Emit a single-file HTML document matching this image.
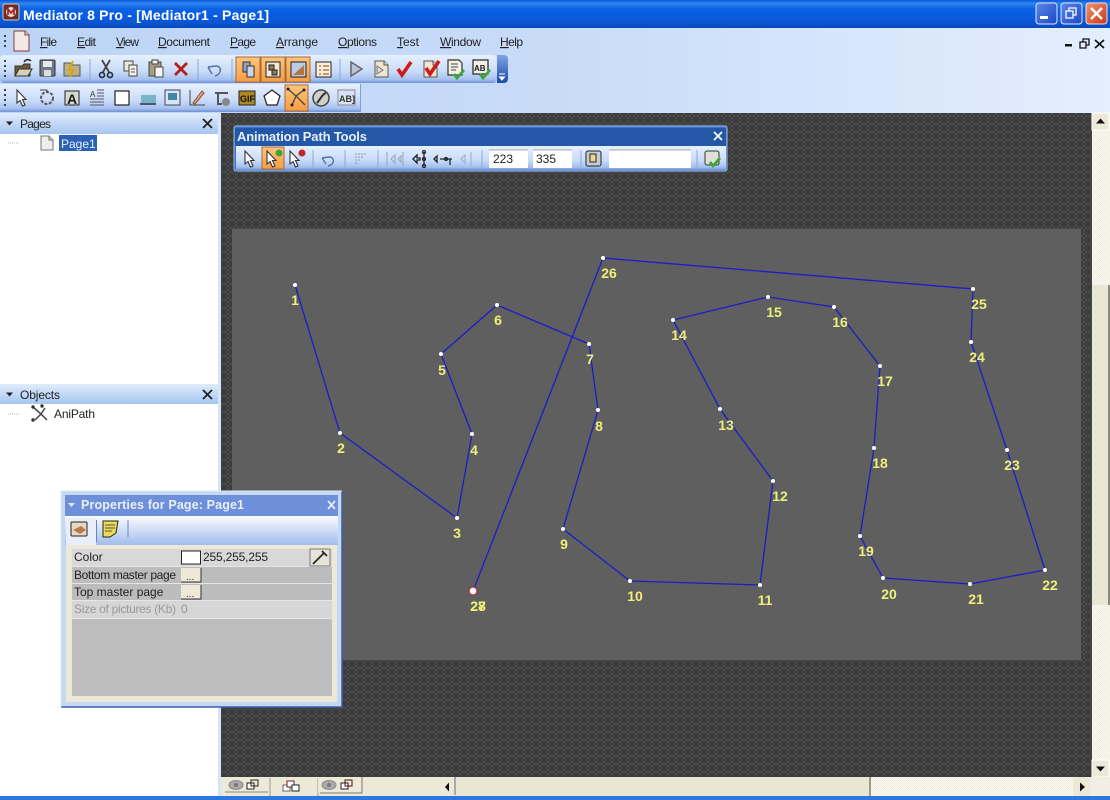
<!DOCTYPE html>
<html><head><meta charset="utf-8"><title>Mediator 8 Pro</title>
<style>
html,body{margin:0;padding:0;background:#fff;width:1110px;height:800px;overflow:hidden}
svg{display:block;filter:blur(.35px)}
text{font-family:"Liberation Sans",sans-serif;font-size:12px;fill:#1a1a1a}
.m{font-size:12px;fill:#222}
.l{font-size:14px;font-weight:bold;fill:#eef07a}
.u{text-decoration:underline}
.p{font-size:12px;fill:#222}
</style></head><body>
<svg width="1110" height="800" viewBox="0 0 1110 800" xmlns="http://www.w3.org/2000/svg">
<defs>
<linearGradient id="tb" x1="0" y1="0" x2="0" y2="1"><stop offset="0" stop-color="#0a55d8"/><stop offset=".12" stop-color="#2f86f2"/><stop offset=".3" stop-color="#0b63e6"/><stop offset=".8" stop-color="#0a56d6"/><stop offset="1" stop-color="#0a48b8"/></linearGradient>
<linearGradient id="mb" x1="0" y1="0" x2="1" y2="0"><stop offset="0" stop-color="#bcd4f6"/><stop offset=".5" stop-color="#c8dcf8"/><stop offset="1" stop-color="#e4eefd"/></linearGradient>
<linearGradient id="tool" x1="0" y1="0" x2="0" y2="1"><stop offset="0" stop-color="#e6f0fe"/><stop offset=".6" stop-color="#c8dbf8"/><stop offset=".88" stop-color="#a5c0ee"/><stop offset="1" stop-color="#6f90d4"/></linearGradient>
<linearGradient id="head" x1="0" y1="0" x2="0" y2="1"><stop offset="0" stop-color="#e0ecfc"/><stop offset="1" stop-color="#a6c5f0"/></linearGradient>
<linearGradient id="orange" x1="0" y1="0" x2="0" y2="1"><stop offset="0" stop-color="#fcc67c"/><stop offset="1" stop-color="#f79c42"/></linearGradient>
<linearGradient id="ptab" x1="0" y1="0" x2="0" y2="1"><stop offset="0" stop-color="#fbfcff"/><stop offset="1" stop-color="#a2bcec"/></linearGradient>
<linearGradient id="btnb" x1="0" y1="0" x2="1" y2="1"><stop offset="0" stop-color="#5b86ea"/><stop offset="1" stop-color="#1d48c4"/></linearGradient>
<linearGradient id="btnr" x1="0" y1="0" x2="1" y2="1"><stop offset="0" stop-color="#ee9470"/><stop offset="1" stop-color="#c9381a"/></linearGradient>
<linearGradient id="chev" x1="0" y1="0" x2="0" y2="1"><stop offset="0" stop-color="#7ea3e6"/><stop offset="1" stop-color="#1e4aa6"/></linearGradient>
<pattern id="hatch" width="8" height="8" patternUnits="userSpaceOnUse"><rect width="8" height="8" fill="#404040"/><path d="M4 0.500L7.500 4L4 7.500L.5 4Z" fill="#4e4e4e"/><path d="M0 0L8 8M8 0L0 8" stroke="#363636" stroke-width=".8"/></pattern>
<pattern id="dith" width="2" height="2" patternUnits="userSpaceOnUse"><rect width="2" height="2" fill="#fbfaf3"/><rect width="1" height="1" fill="#efecdd"/><rect x="1" y="1" width="1" height="1" fill="#efecdd"/></pattern>
<g id="arrow"><path d="M-4-8L-4 5L-1 2.500L1.500 8L4 7L1.500 1.500L5 1.500Z" fill="#fff" stroke="#333" stroke-width="1.100"/></g>
<g id="doc"><path d="M-6-8H3L7-4V8H-6Z" fill="#f0e6d0" stroke="#555"/><path d="M3-8V-4H7" fill="#ddd" stroke="#555"/></g>
<g id="check"><path d="M-7 0L-3 6L6-7" fill="none" stroke="#cc1c1c" stroke-width="3.600"/></g>
<g id="gcheck"><path d="M-3 4L0 8L7 0" fill="none" stroke="#3ca63c" stroke-width="2.800"/></g>
<g id="textdoc"><path d="M-7-8H4L7-5V7H-7Z" fill="#f4f2e6" stroke="#333" stroke-width="1.200"/><path d="M-4-4H3M-4-1H3M-4 2H1" stroke="#444"/></g>
</defs>

<rect width="1110" height="800" fill="#fff"/>
<!-- title bar -->
<rect width="1110" height="28" fill="url(#tb)"/>
<rect x="3" y="4" width="16" height="16" rx="2" fill="#6d2b24" stroke="#d8c8c0"/>
<circle cx="11" cy="12" r="5" fill="#e9d8d0"/><path d="M8 15V9L11 13L14 9V15" fill="none" stroke="#9c1c1c" stroke-width="1.600"/>
<text x="23" y="20" style="font-size:14px;font-weight:bold;fill:#fff" textLength="246">Mediator 8 Pro - [Mediator1 - Page1]</text>
<rect x="1036" y="3" width="21" height="21" rx="3" fill="url(#btnb)" stroke="#dfe8fb"/><rect x="1040" y="16" width="8" height="3" fill="#fff"/>
<rect x="1061" y="3" width="21" height="21" rx="3" fill="url(#btnb)" stroke="#dfe8fb"/><path d="M1066 11h7v7h-7zM1069 11V8h7v7h-3" fill="none" stroke="#fff" stroke-width="1.300"/>
<rect x="1086" y="3" width="21" height="21" rx="3" fill="url(#btnr)" stroke="#f2e0dc"/><path d="M1091 8L1102 19M1102 8L1091 19" stroke="#fff" stroke-width="2.400"/>

<!-- command bars background -->
<rect y="28" width="1110" height="85" fill="url(#mb)"/>
<path d="M5 35v2M5 40v2M5 45v2" stroke="#345" stroke-width="2"/>
<path d="M14 31H25L29 35V51H14Z" fill="#f2e8e4" stroke="#8a3a3a"/><path d="M25 31V35H29" fill="#ddd" stroke="#8a3a3a"/>
<text class="m" x="40" y="46" textLength="17"><tspan class="u">F</tspan>ile</text>
<text class="m" x="77" y="46" textLength="19"><tspan class="u">E</tspan>dit</text>
<text class="m" x="116" y="46" textLength="23"><tspan class="u">V</tspan>iew</text>
<text class="m" x="158" y="46" textLength="52"><tspan class="u">D</tspan>ocument</text>
<text class="m" x="230" y="46" textLength="26"><tspan class="u">P</tspan>age</text>
<text class="m" x="276" y="46" textLength="42"><tspan class="u">A</tspan>rrange</text>
<text class="m" x="338" y="46" textLength="39"><tspan class="u">O</tspan>ptions</text>
<text class="m" x="397" y="46" textLength="22"><tspan class="u">T</tspan>est</text>
<text class="m" x="440" y="46" textLength="41"><tspan class="u">W</tspan>indow</text>
<text class="m" x="500" y="46" textLength="23"><tspan class="u">H</tspan>elp</text>
<rect x="1065" y="44" width="7" height="2.500" fill="#111"/>
<path d="M1080 42h6v6h-6zM1083 42v-3h6v6h-3" fill="none" stroke="#111" stroke-width="1.300"/>
<path d="M1095 40L1104 48M1104 40L1095 48" stroke="#111" stroke-width="1.700"/>

<!-- toolbar 1 -->
<rect x="0" y="55" width="497" height="28" rx="4" fill="url(#tool)"/>
<path d="M497 55h7a4 4 0 0 1 4 4v20a4 4 0 0 1-4 4h-7Z" fill="url(#chev)"/>
<path d="M499 74h6M499.500 77h5l-2.500 3Z" stroke="#fff" fill="#fff"/>
<path d="M5 60v2M5 65v2M5 70v2M5 75v2" stroke="#345" stroke-width="2"/>
<path d="M15 66H22L24 64H30V76H15Z" fill="#6d5a38" stroke="#333"/><path d="M15 76L19 69H32L28 76Z" fill="#d8d0b8" stroke="#333"/><path d="M24 62C26 59 29 59 31 61" fill="none" stroke="#222" stroke-width="1.500"/>
<rect x="40" y="60" width="15" height="16" rx="1" fill="#6e7a8a" stroke="#333"/><rect x="43" y="61" width="9" height="6" fill="#e8e8e8"/><rect x="44" y="70" width="7" height="6" fill="#ddd"/>
<path d="M64 63H70L72 65H80V76H64Z" fill="#bdae88" stroke="#555"/><path d="M73 61L69 70H73L70 77" fill="none" stroke="#d8a800" stroke-width="2"/>
<path d="M90 59V80M198 59V80M232 59V80M340 59V80" stroke="#8fa8d4"/>
<path d="M102 60L109 72M110 60L103 72" stroke="#444" stroke-width="1.800"/><circle cx="102" cy="75" r="2.500" fill="none" stroke="#234" stroke-width="1.700"/><circle cx="110" cy="75" r="2.500" fill="none" stroke="#234" stroke-width="1.700"/>
<path d="M124 61h9v10h-9Z" fill="#e8e8de" stroke="#444"/><path d="M129 65h8v11h-8Z" fill="#f2f2e8" stroke="#444"/><path d="M131 69h4M131 72h4" stroke="#555"/>
<rect x="149" y="62" width="12" height="14" fill="#a89c84" stroke="#444"/><rect x="152" y="60" width="6" height="4" fill="#eee" stroke="#444"/><rect x="155" y="67" width="8" height="10" fill="#f6f6ee" stroke="#444"/>
<path d="M175 63L187 75M187 63L175 75" stroke="#b02020" stroke-width="2.800"/>
<path d="M208 67L212 74M208 67L216 66C222 66 222 74 215 76" fill="none" stroke="#5670a8" stroke-width="1.500"/>
<rect x="236" y="57" width="24" height="25" fill="url(#orange)" stroke="#a8683a"/>
<rect x="261" y="57" width="24" height="25" fill="url(#orange)" stroke="#a8683a"/>
<rect x="286" y="57" width="24" height="25" fill="url(#orange)" stroke="#a8683a"/>
<path d="M243 62h7v10h-7Z" fill="#8fa4c8" stroke="#333"/><path d="M247 66h7v11h-7Z" fill="#c8d4e8" stroke="#333"/>
<rect x="266" y="62" width="14" height="15" fill="#f2ead8" stroke="#222"/><path d="M269 65h5v5h-5zM272 70h5v5h-5z" fill="#8a7c54" stroke="#222"/>
<rect x="291" y="62" width="15" height="15" fill="#b8cce8" stroke="#222"/><path d="M293 75L304 65V75Z" fill="#b8743a"/>
<rect x="316" y="62" width="15" height="15" fill="#f6f0dc" stroke="#222"/><path d="M319 66h2M323 66h6M319 70h2M323 70h6M319 74h2M323 74h6" stroke="#b85a30" stroke-width="1.300"/>
<path d="M351 62L362 69L351 76Z" fill="#b8c4d8" stroke="#666" stroke-width="1.500"/>
<use href="#doc" x="381" y="69"/><path d="M377 66l6 4-6 4Z" fill="#ddd" stroke="#777"/>
<use href="#check" x="405" y="69"/>
<use href="#doc" x="430" y="69"/><use href="#check" x="433" y="68"/>
<use href="#textdoc" x="455" y="68"/><use href="#gcheck" x="457" y="70"/>
<rect x="473" y="60" width="15" height="14" fill="#f0f0e8" stroke="#222" stroke-width="1.200"/><text x="474" y="71" style="font-size:8px;font-weight:bold">AB</text><use href="#gcheck" x="483" y="70"/>

<!-- toolbar 2 -->
<rect x="0" y="84" width="361" height="28" fill="url(#tool)"/><rect x="360" y="84" width="1" height="28" fill="#7f9fdc"/>
<path d="M5 89v2M5 94v2M5 99v2M5 104v2" stroke="#345" stroke-width="2"/>
<use href="#arrow" x="21" y="98"/>
<circle cx="47" cy="98" r="6" fill="none" stroke="#555" stroke-width="2" stroke-dasharray="3 1.500"/><path d="M40 90h7v3" fill="none" stroke="#444"/>
<rect x="65" y="91" width="14" height="14" fill="#d8d8ce" stroke="#222"/><text x="67" y="104" style="font-size:14px;font-weight:bold">A</text>
<text x="90" y="97" style="font-size:8px;fill:#333">A</text><path d="M97 90h7M97 93h7M97 96h7M90 99h14M90 102h14M90 105h14" stroke="#556"/>
<rect x="115" y="91" width="14" height="14" fill="#fff" stroke="#222" stroke-width="1.200"/>
<rect x="141" y="95" width="15" height="8" fill="#7ab4c8"/><path d="M140 104h16" stroke="#2a3a5a" stroke-width="1.600"/>
<rect x="165" y="90" width="15" height="15" fill="#d8e4f4" stroke="#445"/><rect x="168" y="93" width="9" height="7" fill="#3a8aa8"/>
<path d="M190 90V105H205" fill="none" stroke="#444"/><path d="M193 103L202 91L204 93L195 104Z" fill="#e8b868" stroke="#844"/>
<path d="M215 93h13M218 93V104h4" fill="none" stroke="#555" stroke-width="2"/><circle cx="226" cy="102" r="4" fill="#888"/>
<rect x="239" y="91" width="16" height="14" fill="#b08820" stroke="#222"/><text x="240" y="102" style="font-size:9px;font-weight:bold;fill:#111">GIF</text>
<path d="M272 90L280 96L277 105H267L264 96Z" fill="#fff" stroke="#222" stroke-width="1.200"/>
<rect x="285" y="85" width="23" height="26" fill="url(#orange)" stroke="#a8683a"/>
<path d="M288 89L296 96L292 105M304 90L296 96L305 105" fill="none" stroke="#444" stroke-width="1.300"/><circle cx="288" cy="89" r="1.500" fill="#222"/><circle cx="304" cy="90" r="1.500" fill="#222"/><circle cx="292" cy="105" r="1.500" fill="#222"/>
<circle cx="321" cy="98" r="8" fill="#d0d0c8" stroke="#444" stroke-width="1.500"/><path d="M317 103C320 100 322 94 326 93" fill="none" stroke="#333" stroke-width="2"/>
<rect x="338" y="90" width="17" height="15" fill="#d8e2f0" stroke="#889"/><text x="339" y="102" style="font-size:9px;font-weight:bold;fill:#333">AB]</text>

<!-- left panels -->
<rect x="0" y="113" width="222" height="684" fill="#fff"/>
<rect x="218" y="113" width="4" height="684" fill="#d4e4fa"/>
<rect x="0" y="113" width="218" height="21" fill="url(#head)"/>
<path d="M6 121.500h7l-3.500 4Z" fill="#222"/>
<text x="20" y="128" style="font-size:12px;fill:#222" textLength="31">Pages</text>
<path d="M203 119L212 128M212 119L203 128" stroke="#222" stroke-width="1.800"/>
<path d="M8 143h12" stroke="#bbb" stroke-dasharray="1 1"/>
<path d="M41 136H49L53 140V150H41Z" fill="#eeeeea" stroke="#777"/><path d="M49 136V140H53" fill="#ccc" stroke="#777"/>
<rect x="59" y="135" width="38" height="16" fill="#2b61b4"/>
<text x="61" y="148" style="font-size:12px;fill:#eaf0fb">Page1</text>
<rect x="0" y="384" width="218" height="20" fill="url(#head)"/>
<path d="M6 392.500h7l-3.500 4Z" fill="#222"/>
<text x="20" y="399" style="font-size:12px;fill:#222" textLength="40">Objects</text>
<path d="M203 390L212 399M212 390L203 399" stroke="#222" stroke-width="1.800"/>
<path d="M8 414h12" stroke="#bbb" stroke-dasharray="1 1"/>
<path d="M33 407L41 414L35 420M45 408L41 414L47 420" fill="none" stroke="#444" stroke-width="1.500"/><circle cx="33" cy="407" r="1.700" fill="#333"/><circle cx="42" cy="406" r="1.700" fill="#333"/><circle cx="33" cy="420" r="1.700" fill="#333"/>
<text x="54" y="418" style="font-size:12px;fill:#222" textLength="41">AniPath</text>

<!-- canvas -->
<rect x="221" y="113" width="871" height="664" fill="url(#hatch)"/>
<rect x="232" y="229" width="849" height="431" fill="#5f5f5f"/>
<polyline points="295,285 340,433 457,518 472,434 441,354 497,305 589,344 598,410 563,529 630,581 760,585 773,481 720,409 673,320 768,297 834,307 880,366 874,448 860,536 883,578 970,584 1045,570 1007,450 971,342 973,289 603,258 473,591" fill="none" stroke="#1c1cc8" stroke-width="1.300"/>
<g fill="#fff">
<circle cx="295" cy="285" r="2"/><circle cx="340" cy="433" r="2"/><circle cx="457" cy="518" r="2"/><circle cx="472" cy="434" r="2"/><circle cx="441" cy="354" r="2"/><circle cx="497" cy="305" r="2"/><circle cx="589" cy="344" r="2"/><circle cx="598" cy="410" r="2"/><circle cx="563" cy="529" r="2"/><circle cx="630" cy="581" r="2"/><circle cx="760" cy="585" r="2"/><circle cx="773" cy="481" r="2"/><circle cx="720" cy="409" r="2"/><circle cx="673" cy="320" r="2"/><circle cx="768" cy="297" r="2"/><circle cx="834" cy="307" r="2"/><circle cx="880" cy="366" r="2"/><circle cx="874" cy="448" r="2"/><circle cx="860" cy="536" r="2"/><circle cx="883" cy="578" r="2"/><circle cx="970" cy="584" r="2"/><circle cx="1045" cy="570" r="2"/><circle cx="1007" cy="450" r="2"/><circle cx="971" cy="342" r="2"/><circle cx="973" cy="289" r="2"/><circle cx="603" cy="258" r="2"/>
</g>
<circle cx="473" cy="591" r="4" fill="#fff" stroke="#b03030" stroke-width="1.300"/>
<g text-anchor="middle">
<text class="l" x="295" y="305">1</text><text class="l" x="341" y="453">2</text><text class="l" x="457" y="538">3</text><text class="l" x="474" y="455">4</text><text class="l" x="442" y="375">5</text><text class="l" x="498" y="325">6</text><text class="l" x="590" y="364">7</text><text class="l" x="599" y="431">8</text><text class="l" x="564" y="549">9</text><text class="l" x="635" y="601">10</text><text class="l" x="765" y="605">11</text><text class="l" x="780" y="501">12</text><text class="l" x="726" y="430">13</text><text class="l" x="679" y="340">14</text><text class="l" x="774" y="317">15</text><text class="l" x="840" y="327">16</text><text class="l" x="885" y="386">17</text><text class="l" x="880" y="468">18</text><text class="l" x="866" y="556">19</text><text class="l" x="889" y="599">20</text><text class="l" x="976" y="604">21</text><text class="l" x="1050" y="590">22</text><text class="l" x="1012" y="470">23</text><text class="l" x="977" y="362">24</text><text class="l" x="979" y="309">25</text><text class="l" x="609" y="278">26</text><text class="l" x="478" y="611">27</text><text class="l" x="478" y="611">28</text>
</g>

<!-- Animation Path Tools -->
<rect x="234" y="126" width="493" height="45" rx="2" fill="#3a70c8" stroke="#9cc0ee"/>
<rect x="235" y="128" width="491" height="18" fill="#2358a6"/>
<text x="237" y="141" style="font-size:13px;font-weight:bold;fill:#e8eefa" textLength="130">Animation Path Tools</text>
<path d="M714 132L722 140M722 132L714 140" stroke="#fff" stroke-width="1.800"/>
<rect x="236" y="146" width="490" height="24" fill="url(#tool)"/>
<use href="#arrow" x="249" y="159"/>
<rect x="262" y="147" width="22" height="22" fill="url(#orange)" stroke="#a8683a"/><use href="#arrow" x="271" y="159"/><circle cx="279" cy="153" r="3.500" fill="#3aa83a"/>
<use href="#arrow" x="294" y="159"/><circle cx="302" cy="153" r="3.500" fill="#c02828"/>
<path d="M313 150V167M345 150V167M378 150V167M482 150V167M581 150V167M697 150V167" stroke="#8fa8d4"/>
<path d="M322 158L326 164M322 158L329 157C335 157 335 165 328 166" fill="none" stroke="#5670a8" stroke-width="1.400"/>
<g fill="#8895a8"><circle cx="356" cy="154" r=".8"/><circle cx="359" cy="154" r=".8"/><circle cx="362" cy="154" r=".8"/><circle cx="365" cy="154" r=".8"/><circle cx="356" cy="157" r=".8"/><circle cx="359" cy="157" r=".8"/><circle cx="362" cy="157" r=".8"/><circle cx="356" cy="160" r=".8"/><circle cx="359" cy="160" r=".8"/><circle cx="356" cy="163" r=".8"/></g>
<g fill="none" stroke="#9aa6ba"><path d="M387 152V166M403 152V166"/><path d="M391 159l4-4v8ZM398 159l3-3v6Z"/></g>
<g fill="none" stroke="#222" stroke-width="1.300"><path d="M413 159l4-4v3h3v2h-3v3Z"/><path d="M424 152V166"/><circle cx="424" cy="152" r="1.500"/><circle cx="424" cy="159" r="1.500"/><circle cx="424" cy="166" r="1.500"/></g>
<g fill="none" stroke="#222" stroke-width="1.300"><path d="M434 159l3-3v6ZM440 159h12"/><circle cx="446" cy="159" r="1.500"/><path d="M450 159V165"/></g>
<g fill="none" stroke="#a0acc0"><path d="M461 159l4-4v8Z"/><path d="M471 152V166"/></g>
<rect x="489" y="150" width="39" height="18" fill="#fff"/><path d="M489 150h39" stroke="#aaa"/>
<text x="493" y="163" style="font-size:12px;fill:#222">223</text>
<rect x="533" y="150" width="39" height="18" fill="#fff"/><path d="M533 150h39" stroke="#aaa"/>
<text x="536" y="163" style="font-size:12px;fill:#222">335</text>
<rect x="586" y="151" width="15" height="15" rx="2" fill="#c8ccd4" stroke="#222"/><path d="M590 154h6v8h-6Z" fill="#e8d888" stroke="#222"/>
<rect x="609" y="150" width="82" height="18" fill="#fff"/><path d="M609 150h82" stroke="#aaa"/>
<rect x="705" y="151" width="14" height="14" rx="2" fill="#e0e0d4" stroke="#333"/><use href="#gcheck" x="713" y="158"/>

<!-- scrollbars -->
<rect x="1092" y="113" width="18" height="664" fill="url(#dith)"/>
<rect x="1092" y="285" width="16" height="320" fill="#e9e6d4"/><rect x="1108" y="285" width="2" height="320" fill="#8a8a80"/>
<rect x="1092" y="113" width="17" height="17" fill="#ece9d8" stroke="#fff"/><path d="M1096 123.500h9l-4.500-5Z" fill="#111"/>
<rect x="1092" y="760" width="17" height="17" fill="#ece9d8" stroke="#fff"/><path d="M1096 766.500h9l-4.500 5Z" fill="#111"/>
<rect x="221" y="777" width="889" height="19" fill="#ece9d8"/>
<rect x="456" y="777" width="620" height="19" fill="url(#dith)"/>
<rect x="456" y="777" width="414" height="19" fill="#e9e6d4"/><rect x="869" y="777" width="2" height="19" fill="#9a9a90"/>
<rect x="438" y="777" width="18" height="19" fill="#ece9d8"/><rect x="454" y="777" width="2" height="18" fill="#aaa"/><path d="M449 782.500v9l-4-4.500Z" fill="#111"/>
<rect x="1073" y="777" width="17" height="19" fill="#ece9d8"/><path d="M1080 782.500v9l5-4.500Z" fill="#111"/>
<rect x="1090" y="777" width="20" height="19" fill="#f2efe2"/>
<!-- tabs -->
<rect x="224" y="777" width="46" height="14" fill="#ece9d8"/><path d="M225 792h43" stroke="#888"/>
<ellipse cx="236" cy="785" rx="7" ry="4.500" fill="#aaa" stroke="#888"/><circle cx="236" cy="785" r="2" fill="#777"/>
<rect x="247" y="783" width="7" height="6" fill="#fff" stroke="#222"/><rect x="251" y="780" width="7" height="6" fill="none" stroke="#222"/>
<path d="M270 778V796M318 778V796" stroke="#999"/>
<rect x="283" y="785" width="7" height="6" fill="#fff" stroke="#666"/><rect x="287" y="781" width="7" height="6" fill="#fff" stroke="#622"/><rect x="292" y="785" width="7" height="6" fill="#fff" stroke="#222"/>
<rect x="318" y="777" width="44" height="16" fill="#ece9d8"/><path d="M362 777V793H320" fill="none" stroke="#777"/>
<ellipse cx="329" cy="785" rx="7" ry="4.500" fill="#aaa" stroke="#888"/><circle cx="329" cy="785" r="2" fill="#777"/>
<rect x="341" y="783" width="7" height="6" fill="#fff" stroke="#222"/><rect x="345" y="780" width="7" height="6" fill="none" stroke="#511"/>
<rect y="796" width="1110" height="4" fill="#2c78dc"/>

<!-- Properties panel -->
<rect x="61" y="491" width="281" height="216" fill="#c6d8f2"/>
<path d="M61 707H342V491" fill="none" stroke="#3a5ea8" stroke-width="1.500"/>
<path d="M61 707V491H342" fill="none" stroke="#dce8fa"/>
<rect x="65" y="495" width="273" height="21" fill="#6e8fda"/>
<path d="M68 503h7l-3.500 4Z" fill="#dfe8fb"/>
<text x="81" y="509" style="font-size:12.500px;font-weight:bold;fill:#eaf0fb" textLength="163">Properties for Page: Page1</text>
<path d="M328 501L335 509M335 501L328 509" stroke="#f2f5fc" stroke-width="1.700"/>
<rect x="65" y="516" width="273" height="29" fill="url(#ptab)"/>
<rect x="66" y="518" width="30" height="27" fill="#e8eefa"/><path d="M96.500 520V542M128 520V537" stroke="#6a85bc"/>
<rect x="71" y="522" width="16" height="14" rx="1" fill="#e8d8c0" stroke="#222"/><path d="M73 530L81 526L86 530L80 534Z" fill="#b87850"/>
<path d="M103 521H118L116 533L110 537H103Z" fill="#eadc50" stroke="#222"/><path d="M105 525h10M105 528h10M105 531h7" stroke="#555"/>
<rect x="66" y="545" width="271" height="157" fill="#ece9d8"/>
<rect x="72" y="549" width="260" height="147" fill="#bdbdbd"/>
<rect x="72" y="549" width="260" height="17" fill="#d8d8d8"/>
<rect x="72" y="567" width="260" height="16" fill="#bcbcbc"/>
<rect x="72" y="584" width="260" height="16" fill="#bcbcbc"/>
<rect x="72" y="601" width="260" height="18" fill="#d6d6d6"/>
<path d="M72 566.500H332M72 583.500H332M72 600.500H332M72 618.500H332" stroke="#e6e6e6"/>
<text class="p" x="74" y="561">Color</text>
<rect x="181.500" y="551" width="19" height="13" fill="#fff" stroke="#222"/>
<text class="p" x="203" y="561" textLength="65">255,255,255</text>
<rect x="310" y="549" width="20" height="17" fill="#e6e4d8" stroke="#777"/><path d="M313 564L324 553M322 551L327 556" stroke="#222" stroke-width="1.600"/>
<text class="p" x="74" y="579" textLength="102">Bottom master page</text>
<rect x="181" y="568" width="20" height="14" fill="#ece9d8"/><path d="M201 568V582H181" fill="none" stroke="#333"/><text x="186" y="580" style="font-size:10px;fill:#222">...</text>
<text class="p" x="74" y="596">Top master page</text>
<rect x="181" y="585" width="20" height="14" fill="#ece9d8"/><path d="M201 585V599H181" fill="none" stroke="#333"/><text x="186" y="597" style="font-size:10px;fill:#222">...</text>
<text class="p" x="74" y="613" style="fill:#999" textLength="102">Size of pictures (Kb)</text>
<text class="p" x="181" y="613" style="fill:#999">0</text>
</svg>
</body></html>
